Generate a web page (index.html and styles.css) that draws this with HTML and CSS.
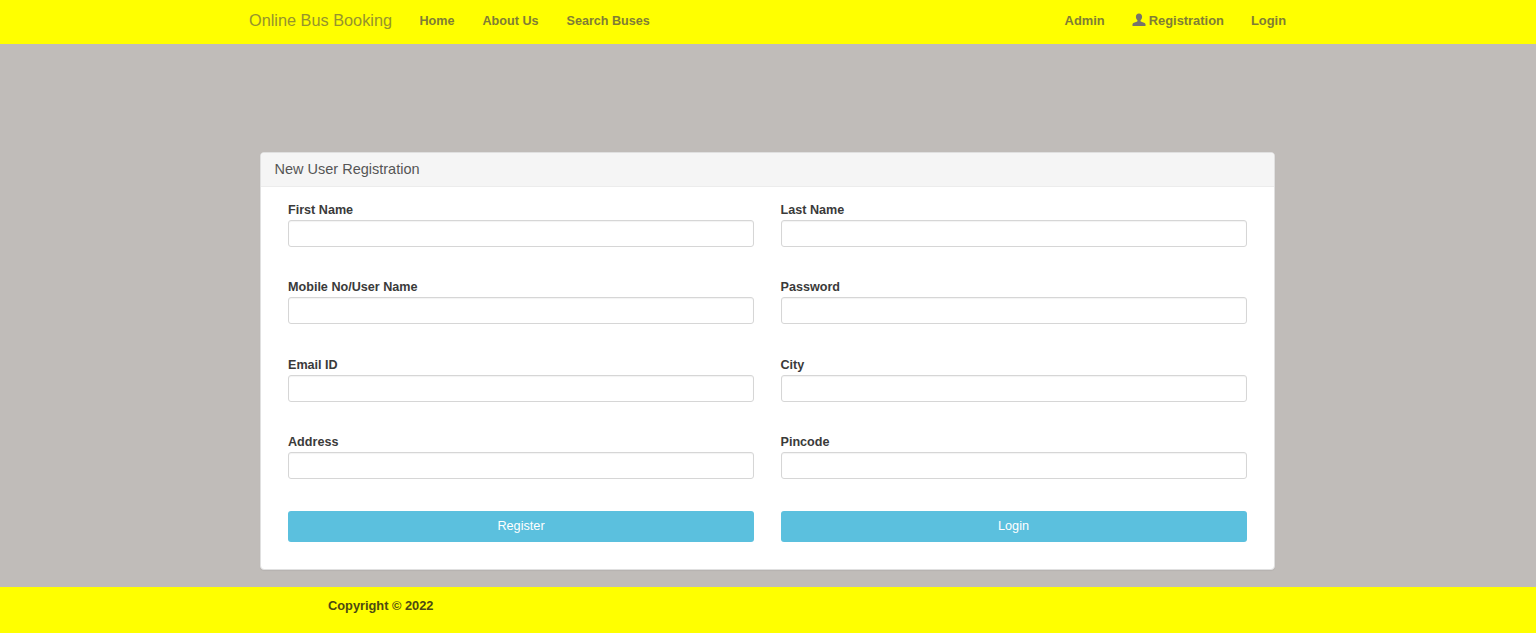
FILE: index.html
```html
<!DOCTYPE html>
<html lang="en">
<head>
  <meta charset="UTF-8" />
  <meta name="viewport" content="width=device-width, initial-scale=1" />
  <title>Online Bus Booking - Registration</title>
  <link rel="stylesheet" href="styles.css">
</head>
<body>
  <nav class="navbar">
    <div class="nav-left">
      <a class="brand" href="#">Online Bus Booking</a>
      <a class="nav-link" href="#">Home</a>
      <a class="nav-link" href="#">About Us</a>
      <a class="nav-link" href="#">Search Buses</a>
    </div>
    <div class="nav-right">
      <a class="nav-link" href="#">Admin</a>
      <a class="nav-link icon-link" href="#">
        <svg class="user-icon" viewBox="0 0 14 14" aria-hidden="true">
          <path d="M7 0.4c-2 0-3.1 1.4-3.1 3.4 0 1.4 0.6 2.7 1.5 3.4 0.2 0.5 0.1 1-0.2 1.3C4 9.2 1.2 9.6 0.5 11v2h13v-2c-0.7-1.4-3.5-1.800-4.7-2.500-0.300-0.300-0.400-0.800-0.200-1.300 0.900-0.700 1.500-2 1.500-3.400C10.100 1.800 9 0.400 7 0.400z"/>
        </svg>
        Registration
      </a>
      <a class="nav-link" href="#">Login</a>
    </div>
  </nav>

  <main class="content">
    <section class="panel">
      <div class="panel-heading">New User Registration</div>
      <form class="panel-body">
        <div class="field">
          <label for="firstName">First Name</label>
          <input type="text" id="firstName" />
        </div>
        <div class="field">
          <label for="lastName">Last Name</label>
          <input type="text" id="lastName" />
        </div>
        <div class="field">
          <label for="mobile">Mobile No/User Name</label>
          <input type="text" id="mobile" />
        </div>
        <div class="field">
          <label for="password">Password</label>
          <input type="password" id="password" />
        </div>
        <div class="field">
          <label for="email">Email ID</label>
          <input type="text" id="email" />
        </div>
        <div class="field">
          <label for="city">City</label>
          <input type="text" id="city" />
        </div>
        <div class="field">
          <label for="address">Address</label>
          <input type="text" id="address" />
        </div>
        <div class="field">
          <label for="pincode">Pincode</label>
          <input type="text" id="pincode" />
        </div>
        <button type="submit" class="btn-info">Register</button>
        <button type="button" class="btn-info">Login</button>
      </form>
    </section>
  </main>

  <footer class="footer">
    <span class="copyright">Copyright © 2022</span>
  </footer>
</body>
</html>
```

FILE: styles.css
```css
* {
  box-sizing: border-box;
}
body {
  font-family: "Liberation Sans", Arial, sans-serif;
  font-size: 13px;
  color: #333;
  background-color: #c0bcb9;
  margin: 0;
  height: 100vh;
  display: flex;
  flex-direction: column;
}
a {
  text-decoration: none;
}
.navbar {
  height: 44px;
  background-color: #ffff00;
  display: flex;
  justify-content: space-between;
  align-items: center;
  padding: 0 250px 3px 249px;
}
.nav-left,
.nav-right {
  display: flex;
  align-items: center;
}
.nav-right {
  gap: 27px;
}
.nav-right .nav-link {
  font-size: 12.900px;
}
.brand {
  font-size: 16.300px;
  color: #96932c;
  margin-right: 27.500px;
}
.nav-link {
  font-size: 12.600px;
  font-weight: bold;
  color: #7f7d35;
}
.nav-left .nav-link {
  margin-right: 28px;
}
.icon-link {
  display: flex;
  align-items: center;
  gap: 3px;
}
.user-icon {
  width: 14px;
  height: 14px;
  fill: #77736b;
  margin-top: -2px;
}
.content {
  flex: 1;
  padding: 108px 261px 0 260px;
}
.panel {
  background-color: #fff;
  border: 1px solid #e0e0e0;
  border-radius: 4px;
  height: 418px;
  box-shadow: 0 1px 1px rgba(0,0,0,0.05);
}
.panel-heading {
  height: 34px;
  line-height: 32px;
  padding: 0 14px 0 13.500px;
  font-size: 14.500px;
  color: #555;
  background-color: #f5f5f5;
  border-bottom: 1px solid #ececec;
  border-radius: 3px 3px 0 0;
}
.panel-body {
  display: grid;
  grid-template-columns: 466px 466px;
  column-gap: 26.500px;
  row-gap: 33.500px;
  padding: 15.500px 27px 0;
}
.field {
  display: flex;
  flex-direction: column;
}
label {
  font-size: 12.600px;
  font-weight: bold;
  line-height: 15px;
  margin-bottom: 2px;
  color: #3a3a3a;
}
input {
  height: 27px;
  border: 1px solid #d6d6d6;
  border-radius: 3px;
  background-color: #fff;
  box-shadow: inset 0 1px 1px rgba(0,0,0,0.05);
  outline: none;
}
.btn-info {
  height: 31px;
  margin-top: -1.500px;
  padding: 0 0 2px;
  border: none;
  border-radius: 3px;
  background-color: #5bc0de;
  color: #fff;
  font-family: inherit;
  font-size: 12.700px;
  cursor: pointer;
}
.footer {
  height: 46px;
  background-color: #ffff00;
  display: flex;
  align-items: center;
  padding: 0 0 9px 328px;
}
.copyright {
  font-size: 12.800px;
  font-weight: bold;
  color: #4d4a12;
}
```
